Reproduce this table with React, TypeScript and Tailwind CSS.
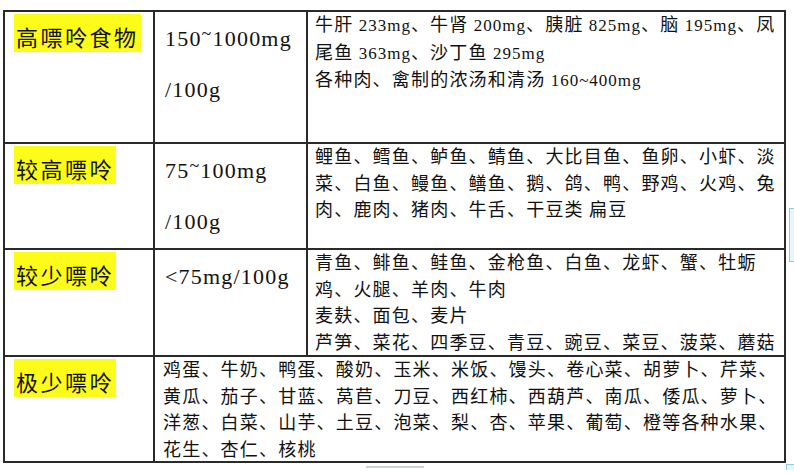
const cjk = '"Noto Sans CJK SC", "Noto Sans", sans-serif';
const mixed = '"Liberation Serif", "Noto Sans CJK SC", serif';

const rows = [
  {
    level: "高嘌呤食物",
    amount: ["150~1000mg", "/100g"],
    foods: [
      "牛肝 233mg、牛肾 200mg、胰脏 825mg、脑 195mg、凤",
      "尾鱼 363mg、沙丁鱼 295mg",
      "各种肉、禽制的浓汤和清汤 160~400mg",
    ],
    h: "h-[132px]",
  },
  {
    level: "较高嘌呤",
    amount: ["75~100mg", "/100g"],
    foods: [
      "鲤鱼、鳕鱼、鲈鱼、鲭鱼、大比目鱼、鱼卵、小虾、淡",
      "菜、白鱼、鳗鱼、鳝鱼、鹅、鸽、鸭、野鸡、火鸡、兔",
      "肉、鹿肉、猪肉、牛舌、干豆类 扁豆",
    ],
    h: "h-[106px]",
  },
  {
    level: "较少嘌呤",
    amount: ["<75mg/100g"],
    foods: [
      "青鱼、鲱鱼、鲑鱼、金枪鱼、白鱼、龙虾、蟹、牡蛎",
      "鸡、火腿、羊肉、牛肉",
      "麦麸、面包、麦片",
      "芦笋、菜花、四季豆、青豆、豌豆、菜豆、菠菜、蘑菇",
    ],
    h: "h-[107px]",
  },
];

const lastFoods = [
  "鸡蛋、牛奶、鸭蛋、酸奶、玉米、米饭、馒头、卷心菜、胡萝卜、芹菜、",
  "黄瓜、茄子、甘蓝、莴苣、刀豆、西红柿、西葫芦、南瓜、倭瓜、萝卜、",
  "洋葱、白菜、山芋、土豆、泡菜、梨、杏、苹果、葡萄、橙等各种水果、",
  "花生、杏仁、核桃",
];

function Amount({ text }: { text: string }) {
  const parts = text.split("~");
  if (parts.length === 1) return <>{text}</>;
  return (
    <>
      {parts[0]}
      <span className="relative -top-[6px] text-[18px]">~</span>
      {parts[1]}
    </>
  );
}

function Level({ text }: { text: string }) {
  return (
    <div className="pl-[9px] pt-[2px]">
      <div
        className="flex h-[38px] w-fit items-end bg-[#fdfb1a] px-[2px] pb-[5px] text-[22px] leading-[22px] tracking-[2.5px] text-[#111]"
        style={{ fontFamily: cjk }}
      >
        {text}
      </div>
    </div>
  );
}

// latin runs are set a bit tighter than the ideographs
function Line({ text }: { text: string }) {
  const runs = text.split(/([\x20-\x7e]+)/).filter(Boolean);
  return (
    <div>
      {runs.map((r, i) =>
        /^[\x20-\x7e]+$/.test(r) ? (
          <span key={i} className="text-[17px] tracking-[1px]">
            {r}
          </span>
        ) : (
          <span key={i}>{r}</span>
        )
      )}
    </div>
  );
}

function Lines({ lines }: { lines: string[] }) {
  return (
    <div
      className="text-[18px] leading-[26.5px] tracking-[1.2px] text-[#111] whitespace-nowrap"
      style={{ fontFamily: mixed }}
    >
      {lines.map((l) => (
        <Line key={l} text={l} />
      ))}
    </div>
  );
}

export default function App() {
  return (
    <div className="relative w-[794px] h-[474px] bg-white overflow-hidden">
      <div className="pl-[3px] pt-[10px]">
        <div className="w-[783px] border-2 border-[#2a2a2a]">
          {rows.map((r) => (
            <div
              key={r.level}
              className={`grid grid-cols-[150px_153px_1fr] border-b-2 border-[#2a2a2a] ${r.h}`}
            >
              <div className="border-r-2 border-[#2a2a2a]">
                <Level text={r.level} />
              </div>
              <div
                className="border-r-2 border-[#2a2a2a] pl-[10px] pt-[14px] text-[22px] tracking-[1.2px] text-[#111]"
                style={{ fontFamily: mixed }}
              >
                {r.amount.map((a) => (
                  <div key={a} className="h-[51px] leading-[26px]">
                    <Amount text={a} />
                  </div>
                ))}
              </div>
              <div className="pl-[7px]">
                <Lines lines={r.foods} />
              </div>
            </div>
          ))}
          <div className="grid grid-cols-[150px_1fr] h-[104px]">
            <div className="border-r-2 border-[#2a2a2a]">
              <Level text="极少嘌呤" />
            </div>
            <div className="pl-[8px]">
              <Lines lines={lastFoods} />
            </div>
          </div>
        </div>
      </div>

      {/* scraps of the page around the table */}
      <div className="absolute left-[789px] top-[208px] w-[8px] h-[54px] border border-[#8fcfdc] bg-[#e3f6f9]" />
      <div className="absolute left-[366px] top-[466px] w-[58px] h-[2px] bg-[#c9d3d6]" />
      <div className="absolute left-[786px] top-[464px] w-[8px] h-[6px] border-t border-l border-[#8fcfdc] bg-[#e3f6f9]" />
    </div>
  );
}
